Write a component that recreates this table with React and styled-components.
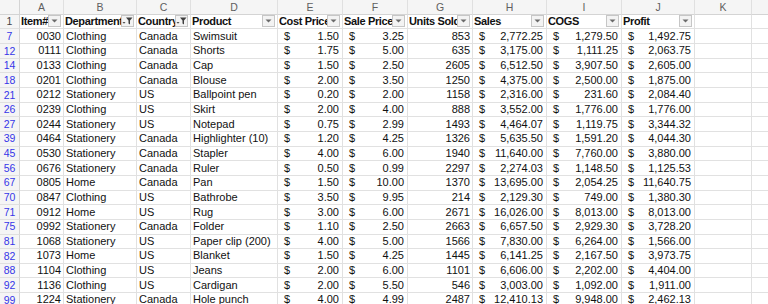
import React from "react";
import styled, { createGlobalStyle } from "styled-components";

const GlobalStyle = createGlobalStyle`
  html, body {
    margin: 0;
    padding: 0;
    background: #ffffff;
    overflow: hidden;
  }
  body {
    font-family: "Liberation Sans", Arial, sans-serif;
  }
`;

const COLS = [
  { key: "A", width: 44 },
  { key: "B", width: 73 },
  { key: "C", width: 54 },
  { key: "D", width: 87 },
  { key: "E", width: 65 },
  { key: "F", width: 65 },
  { key: "G", width: 65 },
  { key: "H", width: 74 },
  { key: "I", width: 75 },
  { key: "J", width: 73 },
  { key: "K", width: 57 },
  { key: "", width: 60 },
];

const HEADERS = [
  { label: "Item#" },
  { label: "Department", filtered: true },
  { label: "Country", filtered: true },
  { label: "Product" },
  { label: "Cost Price" },
  { label: "Sale Price" },
  { label: "Units Sold" },
  { label: "Sales" },
  { label: "COGS" },
  { label: "Profit" },
];

const rows = [
  [7, "0030", "Clothing", "Canada", "Swimsuit", "1.50", "3.25", "853", "2,772.25", "1,279.50", "1,492.75"],
  [12, "0111", "Clothing", "Canada", "Shorts", "1.75", "5.00", "635", "3,175.00", "1,111.25", "2,063.75"],
  [14, "0133", "Clothing", "Canada", "Cap", "1.50", "2.50", "2605", "6,512.50", "3,907.50", "2,605.00"],
  [18, "0201", "Clothing", "Canada", "Blouse", "2.00", "3.50", "1250", "4,375.00", "2,500.00", "1,875.00"],
  [21, "0212", "Stationery", "US", "Ballpoint pen", "0.20", "2.00", "1158", "2,316.00", "231.60", "2,084.40"],
  [26, "0239", "Clothing", "US", "Skirt", "2.00", "4.00", "888", "3,552.00", "1,776.00", "1,776.00"],
  [27, "0244", "Stationery", "US", "Notepad", "0.75", "2.99", "1493", "4,464.07", "1,119.75", "3,344.32"],
  [39, "0464", "Stationery", "Canada", "Highlighter (10)", "1.20", "4.25", "1326", "5,635.50", "1,591.20", "4,044.30"],
  [45, "0530", "Stationery", "Canada", "Stapler", "4.00", "6.00", "1940", "11,640.00", "7,760.00", "3,880.00"],
  [56, "0676", "Stationery", "Canada", "Ruler", "0.50", "0.99", "2297", "2,274.03", "1,148.50", "1,125.53"],
  [67, "0805", "Home", "Canada", "Pan", "1.50", "10.00", "1370", "13,695.00", "2,054.25", "11,640.75"],
  [70, "0847", "Clothing", "US", "Bathrobe", "3.50", "9.95", "214", "2,129.30", "749.00", "1,380.30"],
  [71, "0912", "Home", "US", "Rug", "3.00", "6.00", "2671", "16,026.00", "8,013.00", "8,013.00"],
  [75, "0992", "Stationery", "Canada", "Folder", "1.10", "2.50", "2663", "6,657.50", "2,929.30", "3,728.20"],
  [81, "1068", "Stationery", "US", "Paper clip (200)", "4.00", "5.00", "1566", "7,830.00", "6,264.00", "1,566.00"],
  [82, "1073", "Home", "US", "Blanket", "1.50", "4.25", "1445", "6,141.25", "2,167.50", "3,973.75"],
  [88, "1104", "Clothing", "US", "Jeans", "2.00", "6.00", "1101", "6,606.00", "2,202.00", "4,404.00"],
  [92, "1136", "Clothing", "US", "Cardigan", "2.00", "5.50", "546", "3,003.00", "1,092.00", "1,911.00"],
  [99, "1224", "Stationery", "Canada", "Hole punch", "4.00", "4.99", "2487", "12,410.13", "9,948.00", "2,462.13"],
];

const Sheet = styled.div`
  display: grid;
  grid-template-columns: 20px ${COLS.map((c) => `${c.width}px`).join(" ")};
  grid-auto-rows: 14.67px;
  width: 768px;
  height: 304px;
  overflow: hidden;
  font-size: 11px;
  line-height: 1;
  color: #111;
`;

const Corner = styled.div`
  background: #f5f5f5;
  border-right: 1px solid #d4d4d4;
  border-bottom: 1px solid #d4d4d4;
`;

const ColHead = styled.div`
  display: flex;
  align-items: center;
  justify-content: center;
  background: #f5f5f5;
  color: #5f5f5f;
  border-right: 1px solid #e0e0e0;
  border-bottom: 1px solid #d4d4d4;
  font-size: 10.5px;
`;

const RowHead = styled.div`
  display: flex;
  align-items: center;
  justify-content: center;
  background: #f5f5f5;
  color: ${(p) => (p.$filtered ? "#3535e8" : "#444")};
  border-right: 1px solid #d4d4d4;
  border-bottom: 1px solid #e0e0e0;
  font-size: 10.5px;
`;

const Cell = styled.div`
  display: flex;
  align-items: center;
  justify-content: ${(p) => (p.$right ? "flex-end" : "flex-start")};
  padding: 0 2px;
  border-right: 1px solid #e1e1e1;
  border-bottom: 1px solid #e1e1e1;
  white-space: nowrap;
  overflow: ${(p) => (p.$clip ? "hidden" : "visible")};
  min-width: 0;
  box-sizing: border-box;
`;

const HeaderCell = styled(Cell)`
  font-weight: bold;
  overflow: hidden;
  padding: 0 2px 0 1px;
`;

const HeaderText = styled.span`
  flex: 1;
  overflow: hidden;
  min-width: 0;
  letter-spacing: -0.35px;
`;

const FilterButton = styled.div`
  flex: none;
  width: 13px;
  height: 12px;
  box-sizing: border-box;
  border: 1px solid #c6c6c6;
  background: #f3f3f3;
  display: flex;
  align-items: center;
  justify-content: center;
`;

const Money = styled(Cell)`
  justify-content: space-between;
  padding: 0 3px 0 6px;
`;

const Dropdown = () => (
  <svg width="7" height="4" viewBox="0 0 7 4">
    <path d="M0.5 0.5 L6.5 0.5 L3.5 3.5 Z" fill="#6a6a6a" />
  </svg>
);

const Funnel = () => (
  <svg width="11" height="8" viewBox="0 0 11 8">
    <path d="M0.5 5 L3.5 5 L2 6.8 Z" fill="#505050" />
    <path d="M4 0.5 L10.5 0.5 L8 3.5 L8 7.5 L6.5 6.5 L6.5 3.5 Z" fill="#404040" />
  </svg>
);

const Accounting = ({ value }) => (
  <Money>
    <span>$</span>
    <span>{value}</span>
  </Money>
);

const App = () => {
  return (
    <>
      <GlobalStyle />
      <Sheet>
        <Corner />
        {COLS.map((c, i) => (
          <ColHead key={i}>{c.key}</ColHead>
        ))}

        <RowHead>1</RowHead>
        {HEADERS.map((h) => (
          <HeaderCell key={h.label}>
            <HeaderText>{h.label}</HeaderText>
            <FilterButton>{h.filtered ? <Funnel /> : <Dropdown />}</FilterButton>
          </HeaderCell>
        ))}
        <Cell />
        <Cell />

        {rows.map((r) => (
          <React.Fragment key={r[0]}>
            <RowHead $filtered>{r[0]}</RowHead>
            <Cell $right>{r[1]}</Cell>
            <Cell $clip>{r[2]}</Cell>
            <Cell $clip>{r[3]}</Cell>
            <Cell>{r[4]}</Cell>
            <Accounting value={r[5]} />
            <Accounting value={r[6]} />
            <Cell $right>{r[7]}</Cell>
            <Accounting value={r[8]} />
            <Accounting value={r[9]} />
            <Accounting value={r[10]} />
            <Cell />
            <Cell />
          </React.Fragment>
        ))}
      </Sheet>
    </>
  );
};

export default App;
